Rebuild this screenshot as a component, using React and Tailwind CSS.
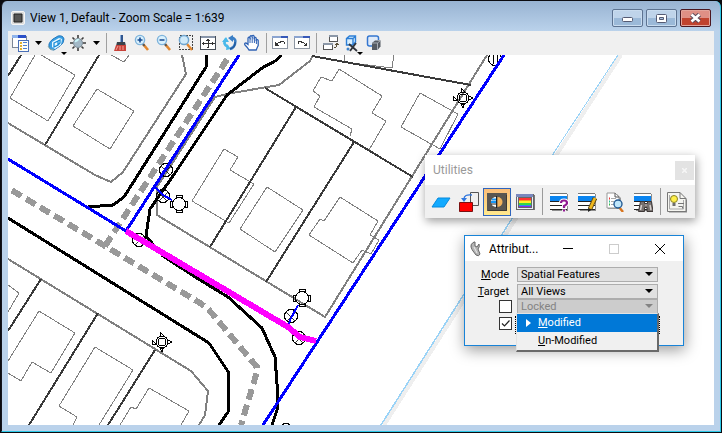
import React from "react";

const Icon = ({ children, size = 18, crisp = false }) => (
  <svg
    width={size}
    height={size}
    viewBox={`0 0 ${size} ${size}`}
    fill="none"
    shapeRendering={crisp ? "crispEdges" : "auto"}
    aria-hidden="true"
  >
    {children}
  </svg>
);

const Magnifier = ({ children }) => (
  <Icon>
    <path d="M10 10l5 6" stroke="#e2872f" strokeWidth="2.6" />
    <path d="M9.5 9.5l2 2.4" stroke="#555" strokeWidth="2" />
    <circle cx="7" cy="6" r="4.6" fill="#d9f0fc" stroke="#7fb4dc" strokeWidth="1.4" />
    {children}
  </Icon>
);

const icons = {
  attributes: (
    <Icon crisp>
      <path d="M1 2h14v11h-14z" fill="#fff" stroke="#7d8796" />
      <path d="M1 1h14v3h-14z" fill="#2b50c8" />
      <path d="M1 1h6v3h-6z" fill="#8fb4ec" />
      <path d="M7 6h10v11h-10z" fill="#fdfdf5" stroke="#4a6fb8" />
      <path d="M9 8.5h2M9 11.5h2M9 14.5h2" stroke="#e0b030" strokeWidth="2" />
      <path d="M12 8.5h4M12 11.5h4M12 14.5h4" stroke="#4d7fd0" />
    </Icon>
  ),
  display: (
    <Icon>
      <path d="M2 10q-1 6 5 6l6-4q4-3 4-7q-1-4-6-3l-5 3q-3 2-4 5z" fill="#3aa0e4" stroke="#2478bd" />
      <path d="M5 8l7-4 3 1-1 6-6 4-3-2z" fill="#e8f8ff" />
      <path d="M7 9l4-2v4l-4 2zM11 7l2-1v3l-2 2" stroke="#178bd8" strokeWidth="1.3" />
      <path d="M1 12q1 4 6 4" stroke="#8aa" />
    </Icon>
  ),
  light: (
    <Icon>
      <path d="M9 1v3M9 14v3M1 9h3M14 9h3M3.5 3.5l2 2M12.5 12.5l2 2M14.5 3.5l-2 2M3.5 14.5l2-2" stroke="#3d3d3d" strokeWidth="1.6" />
      <circle cx="9" cy="9" r="4.5" fill="#a3b8c6" stroke="#7d8b96" />
      <path d="M5.5 8a4 4 0 0 1 5-3q-2 4-5 3z" fill="#c9f6fa" />
    </Icon>
  ),
  brush: (
    <Icon>
      <path d="M9 1h3v8h-3z" fill="#31568e" />
      <path d="M9.5 1v8" stroke="#89abd8" />
      <path d="M6 8h8l1 4h-10z" fill="#39424b" />
      <path d="M5 11h10v6h-12z" fill="#c84138" />
      <path d="M5 16l2-4M9 16v-4M12 16v-4" stroke="#f3a29a" />
    </Icon>
  ),
  zoomIn: (
    <Magnifier>
      <path d="M4.5 6h5M7 3.5v5" stroke="#164a92" strokeWidth="1.6" />
    </Magnifier>
  ),
  zoomOut: (
    <Magnifier>
      <path d="M4.5 6h5" stroke="#164a92" strokeWidth="1.6" />
    </Magnifier>
  ),
  zoomArea: (
    <Icon>
      <path d="M2.5 1.5h13v14h-13z" stroke="#444" strokeDasharray="2 1" shapeRendering="crispEdges" />
      <path d="M10 10l5 6" stroke="#e2872f" strokeWidth="2.4" />
      <circle cx="7" cy="6" r="4.6" fill="#cfeafa" stroke="#6fa5cf" strokeWidth="1.5" />
    </Icon>
  ),
  fit: (
    <Icon crisp>
      <path d="M1.5 2.5h15v13h-15z" fill="#fff" stroke="#454c56" />
      <path d="M2 2h14v2h-14z" fill="#8794a8" />
      <path d="M9 5v9M3 9.5h12" stroke="#333" />
      <path d="M9 4l2 2.5h-4zM9 15l2-2.5h-4zM2.5 9.5l2.5-2v4zM15.5 9.5l-2.5-2v4z" fill="#333" />
    </Icon>
  ),
  rotate: (
    <Icon>
      <path d="M10 3q6 2 4 7q-1 4-5 5" stroke="#3b7fc6" strokeWidth="2.6" />
      <path d="M12 1l-5 3 5 4z" fill="#3b7fc6" />
      <path d="M5 5q-4 5 2 8" stroke="#49b9ea" strokeWidth="2.8" />
      <path d="M1 8h7l-3-5zM5 16l5-1-4-5z" fill="#49b9ea" />
      <path d="M9 15q6-2 5-7" stroke="#235a9c" strokeWidth="1.4" />
    </Icon>
  ),
  hand: (
    <Icon>
      <path d="M6 16q-1-2-4-5-1-2 1-2l2 1.5V4q1-1.5 2 0V2.5q1-1.5 2 0V2q1.5-1.5 2.2.5V4q1.5-1.5 2 .5v1.5q1.500-1 2 .5v5q-1 2-2 4.500z" fill="#fff" stroke="#2f62b4" strokeWidth="1.3" />
      <path d="M7 4v5M9.2 3v6M11.4 4v5M13.4 6v4" stroke="#2f62b4" />
    </Icon>
  ),
  previous: (
    <Icon crisp>
      <path d="M1.5 3.5h15v11h-15z" fill="#fff" stroke="#8d96a2" />
      <path d="M1 2h16v2h-16z" fill="#3658b8" />
      <path d="M1 2h9v2h-9z" fill="#8ba4d0" />
      <path d="M5 11q3-4 8-3v2" stroke="#333" />
      <path d="M4 8v4h4z" fill="#333" />
    </Icon>
  ),
  next: (
    <Icon crisp>
      <path d="M1.5 3.5h15v11h-15z" fill="#fff" stroke="#8d96a2" />
      <path d="M1 2h16v2h-16z" fill="#3658b8" />
      <path d="M1 2h9v2h-9z" fill="#8ba4d0" />
      <path d="M13 11q-3-4-8-3v2" stroke="#333" />
      <path d="M14 8v4h-4z" fill="#333" />
    </Icon>
  ),
  copyView: (
    <Icon crisp>
      <path d="M8.5 1.5h8v6h-8zM2.5 9.5h9v6h-9z" fill="#fff" stroke="#555" />
      <path d="M8 1h9v2h-9zM2 9h10v2h-10z" fill="#8c98a8" />
      <path d="M13 14q3 0 2-4" stroke="#5b5138" />
      <path d="M13 11h5l-2-3z" fill="#5b5138" />
    </Icon>
  ),
  clip: (
    <Icon>
      <path d="M3.5 4.5l3-2.5h6v6l-2.500 3h-6.500zM3.500 4.500h6.500v6M10 4.500l2.500-2" fill="#d8efff" stroke="#2d7fd6" strokeWidth="1.4" />
      <path d="M6 10l8 7M13 9l-6 8" stroke="#30343c" strokeWidth="1.8" />
      <circle cx="5" cy="15" r="1.5" fill="#3c82cc" />
    </Icon>
  ),
  mask: (
    <Icon>
      <path d="M8 12h-3.500q-2 0-2-2V4q0-2 2-2h7q2 0 2 2v2" fill="#dfeaf8" stroke="#3577d0" strokeWidth="1.5" />
      <path d="M7 9l3-2.500h5.500v6l-3 3.500h-5.500z" fill="#555b63" />
      <path d="M7 9h5.500v7M12.500 9l3-2.500" stroke="#a8aeb6" />
    </Icon>
  ),
};

const Caret = () => (
  <svg width="7" height="4" viewBox="0 0 7 4" aria-hidden="true">
    <path d="M0 0h7L3.5 4z" fill="#000" />
  </svg>
);

const ToolButton = ({ name, icon, menu }) => (
  <button type="button" aria-label={name} className="relative flex h-6 w-[22px] items-center justify-center">
    {icon}
    {menu && (
      <span className="absolute right-0 bottom-0">
        <svg width="6" height="3" viewBox="0 0 6 3" className="block" aria-hidden="true">
          <path d="M0 0h6L3 3z" fill="#000" />
        </svg>
      </span>
    )}
  </button>
);

const DropButton = ({ name }) => (
  <button type="button" aria-label={name} className="flex h-6 w-[14px] items-center justify-center">
    <Caret />
  </button>
);

const Divider = () => <span className="mr-0.5 ml-[3px] h-5 w-px bg-[#a0a0a0]" />;

const ViewToolbar = () => (
  <div className="flex h-6 shrink-0 items-center overflow-hidden bg-[#f0f0f0] pl-px">
    <ToolButton name="View Attributes" icon={icons.attributes} />
    <DropButton name="View Attributes list" />
    <ToolButton name="Display Style" icon={icons.display} menu />
    <ToolButton name="Brightness" icon={icons.light} />
    <DropButton name="Brightness list" />
    <Divider />
    <ToolButton name="Update View" icon={icons.brush} />
    <ToolButton name="Zoom In" icon={icons.zoomIn} />
    <ToolButton name="Zoom Out" icon={icons.zoomOut} />
    <ToolButton name="Window Area" icon={icons.zoomArea} />
    <ToolButton name="Fit View" icon={icons.fit} />
    <ToolButton name="Rotate View" icon={icons.rotate} />
    <ToolButton name="Pan View" icon={icons.hand} />
    <Divider />
    <ToolButton name="View Previous" icon={icons.previous} />
    <ToolButton name="View Next" icon={icons.next} />
    <Divider />
    <ToolButton name="Copy View" icon={icons.copyView} />
    <ToolButton name="Clip Volume" icon={icons.clip} menu />
    <ToolButton name="Clip Mask" icon={icons.mask} />
  </div>
);

const TitleBar = () => (
  <header className="flex h-[30px] shrink-0 items-center justify-between pt-1 pr-[3px] pl-[3px]">
    <div className="flex min-w-0 items-center gap-[5px]">
      <svg width="14" height="14" viewBox="0 0 14 14" aria-hidden="true">
        <rect x="0.5" y="0.5" width="13" height="13" rx="1.5" fill="#d9d9d9" stroke="#f5f5f5" />
        <path d="M3 3h8v8h-8z" fill="#555" stroke="#222" />
      </svg>
      <h1 className="truncate text-xs text-black">View 1, Default - Zoom Scale = 1:639</h1>
    </div>
    <div className="flex shrink-0 gap-[3px]">
      <button type="button" aria-label="Minimize" className="flex h-[18px] w-[31px] items-center justify-center rounded-xs border border-[#5d7391] bg-linear-to-b from-[#bfd4ea] from-50% to-[#9bb9d8] to-50% shadow-[inset_0_0_0_1px_#c9dcef]">
        <svg width="11" height="10" viewBox="0 0 11 10" aria-hidden="true">
          <rect x="0.5" y="4.5" width="10" height="4" rx="1" fill="#fff" stroke="#555b73" />
        </svg>
      </button>
      <button type="button" aria-label="Maximize" className="flex h-[18px] w-[31px] items-center justify-center rounded-xs border border-[#5d7391] bg-linear-to-b from-[#bfd4ea] from-50% to-[#9bb9d8] to-50% shadow-[inset_0_0_0_1px_#c9dcef]">
        <svg width="11" height="9" viewBox="0 0 11 9" aria-hidden="true">
          <rect x="0.5" y="0.5" width="10" height="8" rx="1" fill="#fff" stroke="#555b73" />
          <path d="M3.5 3.5h4v2h-4z" fill="#a9c3df" stroke="#555b73" />
        </svg>
      </button>
      <button type="button" aria-label="Close" className="flex h-[18px] w-[31px] items-center justify-center rounded-xs border border-[#4b1720] bg-linear-to-b from-[#df8f85] from-50% to-[#c0432f] to-50% shadow-[inset_0_0_0_1px_#e3a49b]">
        <svg width="13" height="10" viewBox="0 0 13 10" aria-hidden="true">
          <path d="M2.5 1.5l8 7M10.5 1.5l-8 7" stroke="#5b4a5a" strokeWidth="4.6" />
          <path d="M2.5 1.5l8 7M10.5 1.5l-8 7" stroke="#fff" strokeWidth="2.6" />
        </svg>
      </button>
    </div>
  </header>
);

const SunSymbol = ({ x, y }) => (
  <g transform={`translate(${x} ${y})`} stroke="#000" fill="none">
    <circle r="6" />
    <circle r="4" />
    <path d="M-2 -6v-4l4 4zM2 6h-4l2 4v-4M-6 2h-4v-4l4 4zM6 -2l4 2-4 2" />
  </g>
);

const ManholeSymbol = ({ x, y }) => (
  <g transform={`translate(${x} ${y})`} stroke="#000" fill="none">
    <path d="M-3 -6v-2.500h6v2.500l3 3h2.500v6h-2.500l-3 3v2.500h-6v-2.500l-3-3h-2.500v-6h2.500z" />
    <circle r="6.5" />
  </g>
);

const ValveSymbol = ({ x, y }) => (
  <g transform={`translate(${x} ${y})`} stroke="#000" fill="none">
    <circle r="6.5" />
    <path d="M-4.500 -4.500l9 9M4.500 -4.500l-9 9" strokeWidth="0.8" />
  </g>
);

const MapDrawing = () => (
  <svg
    className="block h-full w-full bg-white"
    viewBox="8 55 706 370"
    preserveAspectRatio="xMinYMin slice"
    fill="none"
    shapeRendering="crispEdges"
    role="img"
    aria-label="Site map"
  >
    {/* far boundary */}
    <path d="M621 55L557 154L384 425" stroke="#efefef" strokeWidth="4" />
    <path d="M618 55L553 154" stroke="#9ad3f7" />
    <path d="M553 154L440 332L381 425" stroke="#9ad3f7" strokeWidth="1.5" />

    {/* buildings */}
    <g stroke="#808080">
      <path d="M35 55L10 98L48 121L75 75L41 55" />
      <path d="M97 89L134 111L110 149L73 126Z" />
      <path d="M111 55L124 62L129 55" />
      <path d="M224 149L238 157L230 170L254 184L229 223L192 201Z" />
      <path d="M267 187L303 210L275 252L240 229Z" />
      <path d="M340 197L378 221L370 235L379 240L371 254L362 250L353 263L309 235L320 219L324 221Z" />
      <path d="M369 150L386 121L372 113L382 96L339 69L332 81L321 77L313 91L320 96L314 107L352 129L350 136" />
      <path d="M420 93L458 114L440 149L401 127Z" />
      <path d="M344 55V62L392 68L394 55" />
      <path d="M8 285L19 293L8 312" />
      <path d="M8 361L39 311L75 333L51 373L32 362L21 381L8 373" />
      <path d="M73 425L77 417L59 406L95 347L133 370L99 425" />
      <path d="M120 425L131 407L136 409L149 388L189 411L181 425" />
    </g>

    {/* kerbs and plot frontages */}
    <g stroke="#808080" strokeWidth="2">
      <path d="M8 123L95 175L111 182L123 172L186 74L182 55" />
      <path d="M313 55L310 61L279 85L232 93L215 97L157 187V215L325 317L487 55" />
      <path d="M8 259L191 371L208 391L205 415L199 425" />
    </g>

    {/* plot divisions */}
    <g stroke="#3a3a3a" strokeWidth="2">
      <path d="M8 76L21 55M99 55L45 145M265 88L413 177M296 107L210 247M354 142L266 282M312 56L471 85" />
      <path d="M41 279L8 331M98 313L29 425M155 350L108 425" />
    </g>

    {/* road centre line */}
    <g stroke="#999" strokeWidth="6">
      <path d="M8 188L105 246L200 303L209 310L257 367L256 375L241 425" strokeDasharray="11 5.4" strokeDashoffset="11.8" />
      <path d="M105 246L230 55" strokeDasharray="11 5.3" />
    </g>

    {/* carriageway edges */}
    <g stroke="#000" strokeWidth="3">
      <path d="M8 218L209 343L229 373L228 412L219 425" />
      <path d="M88 207L113 205L124 197L206 67L207 55" />
      <path d="M281 55L277 60L262 68L227 95L175 173L150 209L146 236L163 256L200 280L228 297L262 328L275 357L278 397L277 410L272 425" />
    </g>

    <ValveSymbol x={166} y={170} />
    <ValveSymbol x={163} y={196} />
    <ValveSymbol x={139} y={240} />
    <ValveSymbol x={291} y={316} />
    <ValveSymbol x={299} y={338} />
    <ValveSymbol x={286} y={430} />
    <ManholeSymbol x={179} y={204} />
    <ManholeSymbol x={302} y={298} />
    <SunSymbol x={463} y={98} />
    <SunSymbol x={162} y={342} />
    <g stroke="#000">
      <circle cx="495" cy="59" r="6.5" />
      <path d="M493 55v9M497 55v9" />
    </g>

    {/* water mains */}
    <g stroke="#00f" strokeWidth="3">
      <path d="M8 159L126 231L239 55" />
      <path d="M504 55L263 425" />
      <path d="M156 188L163 195L172 200M298 305L290 320L288 328" strokeWidth="2" />
    </g>
    <path d="M126 231L180 263L288 327L300 337L316 341" stroke="#f0f" strokeWidth="6" />
  </svg>
);

const TableGlyph = ({ children }) => (
  <Icon size={20} crisp>
    <path d="M3 2h16v17h-16z" fill="#8c8c8c" />
    <path d="M1 1h17v17h-17z" fill="#fff" />
    <path d="M1 1h17v1h-17z" fill="#777" />
    <path d="M1 4h17v5h-17z" fill="#0a84f0" />
    <path d="M1 9h17v1h-17zM1 13h17v1h-17zM1 17h17v1h-17z" fill="#222" />
    {children}
  </Icon>
);

const utilityIcons = {
  plane: (
    <Icon size={20}>
      <path d="M7 6h12l-6 9H1z" fill="#12aaff" stroke="#0689dc" />
    </Icon>
  ),
  swap: (
    <Icon size={22}>
      <path d="M12.5 1.5h8v13h-8z" stroke="#555" />
      <path d="M1.5 11.5h13v9h-13z" fill="#f00" stroke="#7a1111" />
      <path d="M14 4q-8-1-8 4" stroke="#2f76de" strokeWidth="1.3" />
      <path d="M3 7h6l-3 4z" fill="#2f76de" />
    </Icon>
  ),
  contrast: (
    <Icon size={20}>
      <path d="M0 1h20v18H0z" fill="#5a5651" />
      <path d="M1 18.500h18.500V3" stroke="#3d3934" />
      <path d="M9 5a5 5 0 0 0 0 10z" fill="#fff" />
      <path d="M4 10h5M5 7.5h4" stroke="#1696f5" strokeWidth="2" />
      <path d="M9.500 4v12M4 12h5" stroke="#222" />
      <path d="M10.500 5a5 5 0 0 1 0 10z" fill="#f3b35b" />
    </Icon>
  ),
  rainbow: (
    <Icon size={20} crisp>
      <path d="M2 3h18v15h-18z" fill="#777" />
      <path d="M1 2h17v15h-17z" fill="#e9edf8" stroke="#666" />
      <path d="M1 2h17v3h-17z" fill="#7987bd" />
      <path d="M4 6h12v2h-12z" fill="#f33" />
      <path d="M4 8h12v1h-12z" fill="#ff9a1a" />
      <path d="M4 9h12v2h-12z" fill="#fff02a" />
      <path d="M4 11h12v2h-12z" fill="#35d645" />
      <path d="M4 13h12v1h-12z" fill="#2a8bf4" />
      <path d="M4 14h12v1h-12z" fill="#8a2be2" />
      <path d="M3.5 5.5h13v10h-13z" stroke="#666" />
    </Icon>
  ),
  query: (
    <TableGlyph>
      <g shapeRendering="auto">
        <path d="M12 11q0-2.500 3-2.500t3 2.500q0 1.500-3 3v2M15 17.500v2" stroke="#fff" strokeWidth="4" />
        <path d="M12 11q0-2.500 3-2.500t3 2.500q0 1.500-3 3v2M15 17.500v2" stroke="#911a91" strokeWidth="2.2" />
      </g>
    </TableGlyph>
  ),
  edit: (
    <TableGlyph>
      <g shapeRendering="auto">
        <path d="M18 6l-5 11" stroke="#5e4a16" strokeWidth="4.6" />
        <path d="M18 6l-5 11" stroke="#f0b81d" strokeWidth="2.8" />
        <path d="M11 16l4 1.500-4 2.500z" fill="#222" />
      </g>
    </TableGlyph>
  ),
  review: (
    <Icon size={20}>
      <path d="M3 2h9l4 4v11h-13z" fill="#999" />
      <path d="M2 1h8l4 4v11h-12z" fill="#fff" stroke="#999" />
      <path d="M10 1v4h4" stroke="#555" />
      <path d="M4 6.5h1" stroke="#e33" strokeWidth="2" />
      <path d="M4 9.5h1" stroke="#29bd8f" strokeWidth="2" />
      <path d="M4 12.5h1" stroke="#36b64a" strokeWidth="2" />
      <path d="M6 6.5h5M6 9.5h3M6 12.5h3" stroke="#aaa" />
      <path d="M14 15l4 5" stroke="#d8741e" strokeWidth="2.4" />
      <circle cx="13" cy="12" r="4" fill="#bfe6fb" stroke="#245b94" strokeWidth="1.4" />
    </Icon>
  ),
  find: (
    <TableGlyph>
      <g shapeRendering="auto">
        <path d="M7.500 9.500h4v2h3v-2h4l1.500 10h-6v-4h-2.500v4h-6z" fill="#77716f" stroke="#3e3837" />
        <path d="M8.500 13l-1 5M17 13l1 5M12.500 13h1" stroke="#d6d0ce" strokeWidth="1.5" />
      </g>
    </TableGlyph>
  ),
  tip: (
    <Icon size={22}>
      <path d="M3 3h12l6 6v12.500h-18z" fill="#888" />
      <path d="M1.500 1.500h12.500l6 6v13h-18.500z" fill="#f5f5f0" stroke="#777" />
      <path d="M14 1.500v6h6" stroke="#777" />
      <path d="M3.500 4v14h14v-9" stroke="#aaa" />
      <circle cx="8" cy="8" r="3.5" fill="#fff04a" stroke="#8a8226" />
      <path d="M6.500 12h3v3h-3z" fill="#6f6f6f" />
      <path d="M12 12.500h6M12.500 15.500h4v2" stroke="#777" />
    </Icon>
  ),
};

const UtilityButton = ({ name, icon, active }) => (
  <button
    type="button"
    aria-label={name}
    aria-pressed={!!active}
    className={
      active
        ? "flex size-7 items-center justify-center border border-[#2f65bd] bg-linear-to-b from-[#fbbd78] to-[#ffe98e]"
        : "flex size-7 items-center justify-center"
    }
  >
    {icon}
  </button>
);

const UtilityDivider = () => <span className="mr-0.5 ml-[3px] h-[27px] w-px bg-[#9a9a9a]" />;

const UtilitiesWindow = () => (
  <section
    aria-label="Utilities"
    className="absolute top-[100px] left-[417px] w-[270px] bg-[#f0f0f0] shadow-[1px_3px_9px_rgba(0,0,0,0.4)]"
  >
    <div className="flex h-[30px] items-center justify-between bg-white pr-px pl-2">
      <h2 className="text-xs text-[#999]">Utilities</h2>
      <button type="button" aria-label="Close Utilities" className="flex h-[19px] w-[19px] items-center justify-center bg-[#e3e3e3]">
        <svg width="5" height="5" viewBox="0 0 5 5" aria-hidden="true">
          <path d="M0 0l5 5M5 0l-5 5" stroke="#f6f6f6" strokeWidth="1.5" />
        </svg>
      </button>
    </div>
    <div className="flex h-[33px] items-center pl-0.5">
      <UtilityButton name="Plane" icon={utilityIcons.plane} />
      <UtilityButton name="Swap" icon={utilityIcons.swap} />
      <UtilityButton name="Attribute Display" icon={utilityIcons.contrast} active />
      <UtilityButton name="Colour Table" icon={utilityIcons.rainbow} />
      <UtilityDivider />
      <UtilityButton name="Query" icon={utilityIcons.query} />
      <UtilityButton name="Edit" icon={utilityIcons.edit} />
      <UtilityButton name="Review" icon={utilityIcons.review} />
      <UtilityButton name="Find" icon={utilityIcons.find} />
      <UtilityDivider />
      <UtilityButton name="Tips" icon={utilityIcons.tip} />
    </div>
  </section>
);

const SelectField = ({ id, options, label, disabled }) => (
  <div className="relative w-[141px]">
    <select
      id={id}
      aria-label={label}
      disabled={disabled}
      className="block h-[15px] w-full appearance-none border border-[#adadad] bg-[#e1e1e1] pl-[3px] text-[11px] leading-[13px] text-black disabled:bg-[#cccccc] disabled:text-[#838383] disabled:opacity-100"
    >
      {options.map((o) => (
        <option key={o}>{o}</option>
      ))}
    </select>
    <span className="pointer-events-none absolute top-[5px] right-[5px]">
      <svg width="8" height="4" viewBox="0 0 8 4" className="block" aria-hidden="true">
        <path d="M0 0h8L4 4z" fill={disabled ? "#838383" : "#000"} />
      </svg>
    </span>
  </div>
);

const AttributeWindow = () => (
  <section
    aria-label="Attributes"
    className="absolute top-[180px] left-[456px] h-[111px] w-[220px] border border-[#1883d7] bg-[#f0f0f0] text-[11px] shadow-[1px_4px_14px_rgba(0,0,0,0.4)]"
  >
    <div className="flex h-[25px] items-center bg-white pl-1">
      <svg width="14" height="16" viewBox="0 0 14 16" aria-hidden="true">
        <path d="M5 1q-4 2-3 5t2 4l3 4q3 2 4-1l-2-5q2-2 1-5l-2 3-2-1v-4z" fill="#b5b5b5" stroke="#666" />
        <path d="M5 6l3 6" stroke="#eee" />
      </svg>
      <h2 className="ml-1.5 grow text-xs text-black">Attribut...</h2>
      <div className="flex">
        <button type="button" aria-label="Minimize" className="flex h-6 w-[46px] items-center justify-center">
          <span className="h-px w-2.5 bg-black" />
        </button>
        <button type="button" aria-label="Maximize" disabled className="flex h-6 w-[46px] items-center justify-center">
          <span className="size-2.5 border border-[#ccc]" />
        </button>
        <button type="button" aria-label="Close" className="flex h-6 w-[46px] items-center justify-center">
          <svg width="10" height="10" viewBox="0 0 10 10" aria-hidden="true">
            <path d="M0 0l10 10M10 0L0 10" stroke="#000" />
          </svg>
        </button>
      </div>
    </div>
    <form className="flex flex-col pt-1.5">
      <div className="flex h-[17px] items-start">
        <label htmlFor="mode" className="w-11 text-right leading-4">
          <u>M</u>ode
        </label>
        <div className="ml-2">
          <SelectField id="mode" options={["Spatial Features"]} />
        </div>
      </div>
      <div className="flex h-[15px] items-start overflow-hidden">
        <label htmlFor="target" className="w-11 text-right leading-4">
          <u>T</u>arget
        </label>
        <div className="ml-2">
          <SelectField id="target" options={["All Views"]} />
        </div>
      </div>
      <div className="flex h-[17px] items-start">
        <input
          type="checkbox"
          aria-label="Use locked"
          className="mt-px ml-[34px] size-[13px] shrink-0 appearance-none border border-[#333] bg-white"
        />
        <div className="ml-[5px]">
          <SelectField id="locked" label="Locked" options={["Locked"]} disabled />
        </div>
      </div>
      <div className="relative flex h-[17px] items-start">
        <span className="relative mt-px ml-[34px] block size-[13px]">
          <input
            type="checkbox"
            aria-label="Use modified"
            defaultChecked
            className="block size-[13px] appearance-none border border-[#333] bg-white"
          />
          <svg width="13" height="13" viewBox="0 0 13 13" fill="none" className="pointer-events-none absolute top-0 left-0" aria-hidden="true">
            <path d="M3 6.5l2.500 2.500 5-5.500" stroke="#222" strokeWidth="1.2" />
          </svg>
        </span>
        <div className="ml-[3px] h-[18px] w-[145px] border-x border-dotted border-black" />
        <ul role="listbox" aria-label="Modification state" className="absolute -top-[3px] left-[51px] w-[143px] border border-[#e3e3e3] border-r-2 border-b-2 border-r-[#696969] border-b-[#696969] bg-[#f0f0f0]">
          <li role="option" aria-selected="true" className="flex h-[18px] items-center bg-[#0078d7] text-white">
            <svg width="5" height="8" viewBox="0 0 5 8" className="ml-[9px]" aria-hidden="true">
              <path d="M0 0l5 4-5 4z" fill="#fff" />
            </svg>
            <span className="ml-[7px]">
              <u>M</u>odified
            </span>
          </li>
          <li role="option" aria-selected="false" className="flex h-[18px] items-center pl-[21px] text-black">
            <span>
              <u>U</u>n-Modified
            </span>
          </li>
        </ul>
      </div>
    </form>
  </section>
);

export default function App() {
  return (
    <div className="flex h-screen w-full flex-col bg-[#0b0b10] p-px font-[Roboto,'Segoe_UI',sans-serif]">
      <div className="relative flex min-h-0 grow flex-col overflow-hidden rounded-t-md border-r border-b border-l border-r-[#2cc9e8] border-b-[#2cc9e8] border-l-[#14141c] bg-[#bad2eb] bg-linear-to-b from-[#98b3d2] to-[#bad2eb] to-[30px] px-1.5 pb-1.5">
        <TitleBar />
        <div className="flex min-h-0 grow flex-col">
          <ViewToolbar />
          <main className="relative min-h-0 grow overflow-hidden bg-white">
            <MapDrawing />
            <UtilitiesWindow />
            <AttributeWindow />
          </main>
        </div>
      </div>
    </div>
  );
}
